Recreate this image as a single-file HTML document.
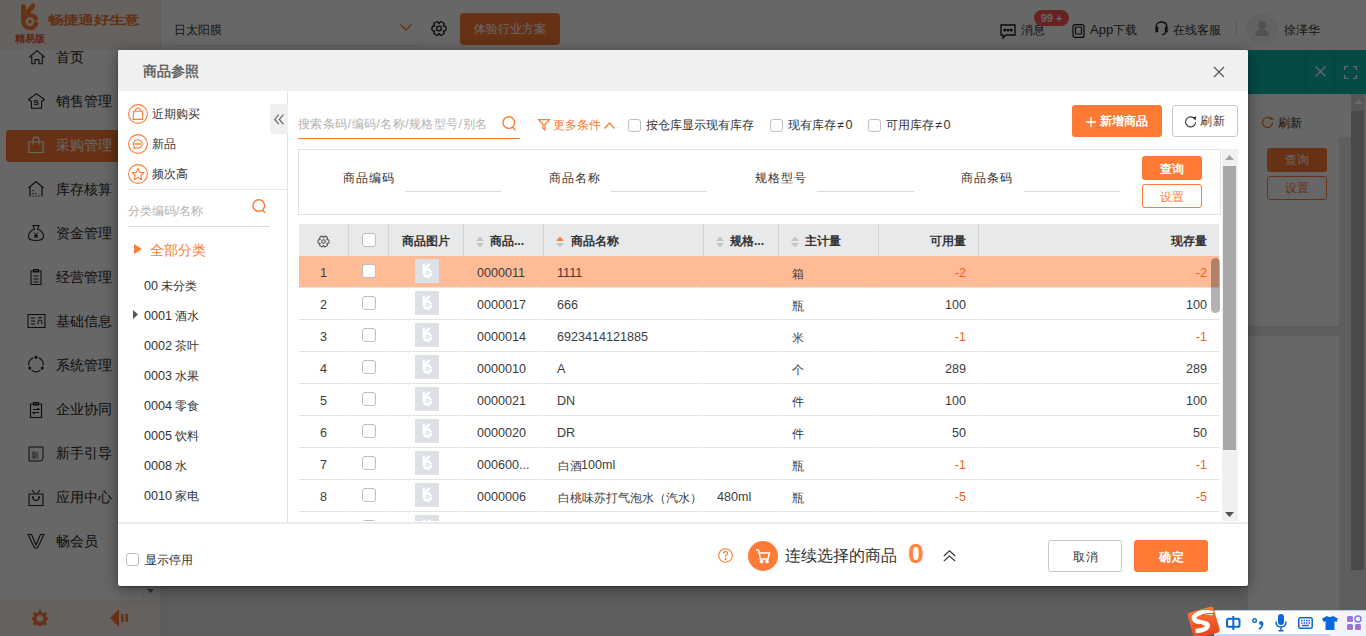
<!DOCTYPE html>
<html><head><meta charset="utf-8">
<style>
*{box-sizing:border-box;margin:0;padding:0}
html,body{width:1366px;height:636px;overflow:hidden;background:#e9e9e9;font-family:"Liberation Sans",sans-serif;color:#333}
.abs{position:absolute}
svg{display:block;overflow:visible}
.d{font-size:12.6px}
/* background app */
#logo{left:0;top:0;width:160px;height:50px;background:#fdf3ee}
#side{left:0;top:50px;width:160px;height:586px;background:#fff}
#side .it{position:absolute;left:56px;font-size:14px;color:#262626;line-height:16px;white-space:nowrap}
#side .ic{position:absolute;left:27px}
#side .act{position:absolute;left:6px;top:80px;width:160px;height:32px;background:#ff7b35;border-radius:3px}
#sidebot{left:0;top:600px;width:160px;height:36px;background:#fbefe9}
#strip{left:160px;top:50px;width:10px;height:586px;background:#e4e4e4}
#hdr{left:160px;top:0;width:1206px;height:50px;background:#fff;box-shadow:inset 1px 0 0 #e8e8e8}
#tabs{left:1248px;top:50px;width:118px;height:44px;background:#0cb9aa}
#rpanel0{left:1248px;top:94px;width:103px;height:43px;background:#fff}
#rpanel1{left:1248px;top:137px;width:91px;height:189px;background:#fff}
#rpanel2{left:1248px;top:336px;width:91px;height:300px;background:#fff}
#rscroll{left:1351px;top:94px;width:13px;height:476px;background:#d4d4d4}
#mask{left:0;top:0;width:1366px;height:636px;background:rgba(0,0,0,.595)}
.hd{position:absolute;font-size:12px;color:#333;line-height:14px;white-space:nowrap}
</style></head><body>
<div id="logo" class="abs">
  <svg class="abs" style="left:20px;top:3px" width="20" height="28" viewBox="0 0 20 28"><rect x="1" y="1" width="4.8" height="19" rx="2.4" fill="#ff7b35"/><path d="M7.4 9.6 L12.9 2.9" stroke="#ff7b35" stroke-width="4.8" stroke-linecap="round"/><circle cx="10" cy="18.6" r="8.7" fill="#ff7b35"/><circle cx="10" cy="18.6" r="4.3" fill="#fdf3ee"/><path d="M10 15.8 Q10.7 17.9 12.8 18.6 Q10.7 19.3 10 21.4 Q9.3 19.3 7.2 18.6 Q9.3 17.9 10 15.8Z" fill="#ff7b35"/><path d="M14.6 18.2 L19.2 16.6 L19.2 19.8 Z" fill="#fdf3ee"/></svg>
  <div class="abs" style="left:48px;top:12px;font-size:15.3px;font-weight:bold;color:#f5762f;letter-spacing:.2px;white-space:nowrap;line-height:16px;transform:scaleY(.76);transform-origin:0 50%">畅捷通好生意</div>
  <div class="abs" style="left:15px;top:33px;font-size:10px;font-weight:bold;color:#e85a2a;white-space:nowrap;line-height:12px">精易版</div>
</div>
<div id="side" class="abs">
  <div class="act"></div>
  <div class="it" style="top:-1px">首页</div>
  <div class="it" style="top:43px">销售管理</div>
  <div class="it" style="top:87px;color:#fff">采购管理</div>
  <div class="it" style="top:131px">库存核算</div>
  <div class="it" style="top:175px">资金管理</div>
  <div class="it" style="top:219px">经营管理</div>
  <div class="it" style="top:263px">基础信息</div>
  <div class="it" style="top:307px">系统管理</div>
  <div class="it" style="top:351px">企业协同</div>
  <div class="it" style="top:395px">新手引导</div>
  <div class="it" style="top:439px">应用中心</div>
  <div class="it" style="top:483px">畅会员</div>
  <!-- icons -->
  <svg class="ic" style="left:29px;top:0px" width="16" height="15" viewBox="0 0 16 15" fill="none" stroke="#222" stroke-width="1.1" stroke-linejoin="round"><path d="M.6 7 L8 .6 L15.4 7 H13.2 V13.8 H10 V9.6 H6 V13.8 H2.8 V7 Z"/></svg>
  <svg class="ic" style="left:28px;top:43px" width="17" height="16" viewBox="0 0 17 16" fill="none" stroke="#222" stroke-width="1.1" stroke-linejoin="round"><path d="M.6 6.5 L8.5 .6 L16.4 6.5 L13.6 8.5 V15.2 H3.4 V8.5 Z"/><text x="5.6" y="11.8" font-size="8" font-family="Liberation Sans" font-weight="bold" fill="#222" stroke="none">S</text></svg>
  <svg class="ic" style="top:86px" width="18" height="18" viewBox="0 0 18 18" fill="none" stroke="#fff" stroke-width="1.2"><path d="M2 6 H16 V16.5 H2 Z M6 8.5 V4 Q6 1.2 9 1.2 Q12 1.2 12 4 V8.5"/></svg>
  <svg class="ic" style="top:130px" width="18" height="18" viewBox="0 0 18 18" fill="none" stroke="#222" stroke-width="1.1"><path d="M1.5 8 L9 1.5 L16.5 8 M3 7 V16.5 M15 7 V16.5"/><path d="M6 10v1M6 13v1M6 15.5v1M9 13v1M9 15.5v1M12 15.5v1" stroke-width="1.3"/></svg>
  <svg class="ic" style="top:174px" width="18" height="18" viewBox="0 0 18 18" fill="none" stroke="#222" stroke-width="1.1"><path d="M6 1.5 H12 L10.5 5 Q16.5 7.5 16.5 12.5 Q16.5 16.5 9 16.5 Q1.5 16.5 1.5 12.5 Q1.5 7.5 7.5 5 Z"/><path d="M7 8.5 L9 11 L11 8.5 M9 11 V14 M7 11.5 H11 M7 13 H11" stroke-width="1"/></svg>
  <svg class="ic" style="top:218px" width="18" height="18" viewBox="0 0 18 18" fill="none" stroke="#222" stroke-width="1.1"><path d="M4 3 H14 V16.5 H4 Z M6.5 1.5 H11.5 V4 H6.5 Z M6.5 8 H11.5 M6.5 11 H11.5 M6.5 14 H11.5"/></svg>
  <svg class="ic" style="top:263px" width="19" height="16" viewBox="0 0 19 16" fill="none" stroke="#222" stroke-width="1.1"><path d="M1 1.5 H18 V14.5 H1 Z M4 5 H8 M4 8 H8 M4 11 H8"/><path d="M11 11 Q11 7 13 7 Q15 7 15 11 M11.5 5 Q13 3.5 14.5 5"/></svg>
  <svg class="ic" style="left:27px;top:306px" width="18" height="17" viewBox="0 0 18 17" fill="none" stroke="#222" stroke-width="1.1"><path d="M11.70 1.82 A7.2 7.2 0 0 1 16.13 9.50 M13.43 14.17 A7.2 7.2 0 0 1 4.57 14.17 M1.87 9.50 A7.2 7.2 0 0 1 6.30 1.82"/><circle cx="9.00" cy="1.30" r="1.5" fill="#222" stroke="none"/><circle cx="15.24" cy="12.10" r="1.5" fill="#222" stroke="none"/><circle cx="2.76" cy="12.10" r="1.5" fill="#222" stroke="none"/></svg>
  <svg class="ic" style="top:351px" width="18" height="18" viewBox="0 0 18 18" fill="none" stroke="#222" stroke-width="1.1"><path d="M3.5 3 H14.5 V16.5 H3.5 Z M6.5 1.5 H11.5 V4 H6.5 Z M6 8.5 H12 L10.5 7 M12 11.5 H6 L7.5 13"/></svg>
  <svg class="ic" style="top:395px" width="18" height="18" viewBox="0 0 18 18" fill="none" stroke="#222" stroke-width="1"><path d="M2 2 H16 V13 Q16 16 13 16 H2 Z"/><text x="4" y="12.5" font-size="8" fill="#222" stroke="none">新</text></svg>
  <svg class="ic" style="top:439px" width="18" height="18" viewBox="0 0 18 18" fill="none" stroke="#222" stroke-width="1.1"><path d="M2 5 H16 V16.5 H2 Z M5 1 L8 4.5 M13 1 L10 4.5 M6 10 Q9 13 12 10"/><circle cx="6" cy="8.5" r=".6" fill="#222"/><circle cx="12" cy="8.5" r=".6" fill="#222"/></svg>
  <svg class="ic" style="top:483px" width="18" height="16" viewBox="0 0 18 16" fill="none" stroke="#222" stroke-width="1.1"><path d="M1 1.5 H4.5 L9 12 L13.5 1.5 H17 L10.5 15 H7.5 Z M4.5 1.5 L8.5 11"/></svg>
  <div class="abs" style="left:142px;top:0;width:18px;height:550px;background:#f7f7f7"></div>
  <svg class="abs" style="left:147px;top:539px" width="7" height="4"><path d="M0 0 H7 L3.5 4Z" fill="#7a7a7a"/></svg>
</div>
<div id="sidebot" class="abs">
  <svg class="abs" style="left:32px;top:10px" width="16" height="16" viewBox="0 0 16 16"><path fill="#ff7b35" d="M6.8 0 H9.2 L9.6 2.2 Q10.6 2.5 11.5 3.1 L13.4 1.9 L15 3.6 L13.8 5.4 Q14.3 6.3 14.5 7.3 L16 7.7 V9.9 L14.5 10.3 Q14.2 11.3 13.7 12.1 L15 14 L13.3 15.6 L11.5 14.4 Q10.6 15 9.6 15.2 L9.2 16 H6.8 L6.4 15.2 Q5.4 15 4.5 14.4 L2.7 15.6 L1 14 L2.3 12.1 Q1.8 11.3 1.5 10.3 L0 9.9 V7.7 L1.5 7.3 Q1.7 6.3 2.2 5.4 L1 3.6 L2.6 1.9 L4.5 3.1 Q5.4 2.5 6.4 2.2 Z M8 5.2 A3.3 3.3 0 1 0 8 11.8 A3.3 3.3 0 1 0 8 5.2Z"/></svg>
  <svg class="abs" style="left:110px;top:9px" width="19" height="18" viewBox="0 0 19 18"><path d="M0 9 L9 0 V18 Z" fill="#ff7b35"/><rect x="11" y="5" width="2.6" height="8" fill="#ff7b35"/><rect x="15.5" y="5" width="2.6" height="8" fill="#ff7b35"/></svg>
</div>
<div id="strip" class="abs"></div>
<div id="hdr" class="abs">
  <div class="hd" style="left:14px;top:23px">日太阳膜</div>
  <div class="abs" style="left:15px;top:45px;width:243px;height:1px;background:#d9d9d9"></div>
  <svg class="abs" style="left:240px;top:24px" width="12" height="7" viewBox="0 0 12 7" fill="none" stroke="#ff7b35" stroke-width="1.3"><path d="M0.5 0.5 L6 6 L11.5 0.5"/></svg>
  <svg class="abs" style="left:271px;top:21px" width="16" height="15" viewBox="0 0 16 15" fill="none" stroke="#1a1a1a" stroke-width="1.3" stroke-linejoin="round"><path d="M14.69 5.45 Q15.56 7.50 14.69 9.55 L12.33 10.00 L13.12 12.27 Q11.78 14.05 9.57 14.32 L8.00 12.50 L6.43 14.32 Q4.22 14.05 2.88 12.27 L3.67 10.00 L1.31 9.55 Q0.44 7.50 1.31 5.45 L3.67 5.00 L2.88 2.73 Q4.22 0.95 6.43 0.68 L8.00 2.50 L9.57 0.68 Q11.78 0.95 13.12 2.73 L12.33 5.00Z"/><circle cx="8" cy="7.5" r="2.4"/></svg>
  <div class="abs" style="left:300px;top:13px;width:100px;height:32px;background:#ff7b35;border-radius:4px;color:#fff;font-size:12px;line-height:32px;text-align:center">体验行业方案</div>
  <!-- right -->
  <svg class="abs" style="left:840px;top:24px" width="16" height="15" viewBox="0 0 16 15" fill="none" stroke="#1a1a1a" stroke-width="1.3"><path d="M1 1 H15 V11 H6 L3 14 V11 H1 Z"/><circle cx="4.8" cy="6" r=".9" fill="#1a1a1a"/><circle cx="8" cy="6" r=".9" fill="#1a1a1a"/><circle cx="11.2" cy="6" r=".9" fill="#1a1a1a"/></svg>
  <div class="hd" style="left:861px;top:23px">消息</div>
  <div class="abs" style="left:874px;top:10px;width:35px;height:16px;background:#ff5656;border-radius:8px;color:#fff;font-size:11px;font-weight:bold;line-height:16px;text-align:center;white-space:nowrap">99 +</div>
  <svg class="abs" style="left:912px;top:24px" width="13" height="14" viewBox="0 0 13 14" fill="none" stroke="#1a1a1a" stroke-width="1.2"><rect x="1" y=".6" width="11" height="12.8" rx="2"/><rect x="3.5" y="3" width="6" height="7" rx=".5"/></svg>
  <div class="hd" style="left:930px;top:23px"><span style="font-size:13px">App</span>下载</div>
  <svg class="abs" style="left:994px;top:21px" width="15" height="15" viewBox="0 0 15 15" fill="none" stroke="#1a1a1a" stroke-width="1.3"><path d="M2 8 V6.5 Q2 1 7.5 1 Q13 1 13 6.5 V8 M2 6.5 H3.5 V10.5 H2 Z M13 6.5 H11.5 V10.5 H13Z M12 10.5 Q11.5 13.5 8 13.5"/></svg>
  <div class="hd" style="left:1013px;top:23px">在线客服</div>
  <div class="abs" style="left:1076px;top:21px;width:1px;height:16px;background:#ddd"></div>
  <div class="abs" style="left:1086px;top:13px;width:32px;height:32px;border-radius:50%;background:#f2f2f2"></div>
  <svg class="abs" style="left:1094px;top:20px" width="16" height="16" viewBox="0 0 16 16"><circle cx="8" cy="5" r="4" fill="#c8c8c8"/><path d="M1 16 Q1 9.5 8 9.5 Q15 9.5 15 16Z" fill="#c8c8c8"/></svg>
  <div class="hd" style="left:1124px;top:23px">徐泽华</div>
</div>
<div id="tabs" class="abs">
  <div class="abs" style="left:57px;top:0;width:1px;height:44px;background:#0aa597"></div>
  <div class="abs" style="left:86px;top:0;width:1px;height:44px;background:#0aa597"></div>
  <svg class="abs" style="left:67px;top:16px" width="11" height="11" viewBox="0 0 11 11" stroke="#fff" stroke-width="1.3"><path d="M.5 .5 L10.5 10.5 M10.5 .5 L.5 10.5"/></svg>
  <svg class="abs" style="left:96px;top:16px" width="13" height="13" viewBox="0 0 13 13" fill="none" stroke="#fff" stroke-width="1.3"><path d="M.6 4 V.6 H4 M9 .6 H12.4 V4 M12.4 9 V12.4 H9 M4 12.4 H.6 V9"/></svg>
</div>
<div id="rpanel0" class="abs">
  <svg class="abs" style="left:13px;top:22px" width="13" height="13" viewBox="0 0 13 13" fill="none" stroke="#ff7b35" stroke-width="1.4"><path d="M11.5 6.5 A5 5 0 1 1 9.5 2.5 M9.8 0.5 V3.2 H12.5"/></svg>
  <div class="hd" style="left:30px;top:22px;font-size:12px">刷新</div>
</div>
<div id="rpanel1" class="abs">
  <div class="abs" style="left:19px;top:11px;width:60px;height:24px;background:#ff7b35;border-radius:3px;color:#fff;font-size:12px;line-height:24px;text-align:center">查询</div>
  <div class="abs" style="left:19px;top:39px;width:60px;height:24px;border:1px solid #ff7b35;border-radius:3px;color:#ff7b35;font-size:12px;line-height:22px;text-align:center">设置</div>
</div>
<div id="rpanel2" class="abs"></div>
<div id="rscroll" class="abs">
  <div class="abs" style="left:0;top:17px;width:13px;height:459px;background:#b8b8b8"></div>
  <svg class="abs" style="left:3px;top:5px" width="9" height="5"><path d="M0 5 H9 L4.5 0Z" fill="#fff"/></svg>
</div>
<div id="mask" class="abs"></div>
<style>
#modal{left:118px;top:50px;width:1130px;height:536px;background:#fff;border-radius:2px;box-shadow:0 1px 2px rgba(0,0,0,.35),0 3px 16px rgba(0,0,0,.4);overflow:hidden}
#mhead{left:0;top:0;width:1130px;height:41px;background:#f0f0f0}
.lbl{position:absolute;font-size:12px;color:#333;line-height:14px;white-space:nowrap}
.cb{position:absolute;width:13px;height:13px;border:1px solid #c0c0c0;border-radius:3px;background:#fff}
.btn{position:absolute;border-radius:3px;text-align:center;white-space:nowrap}
#tbl{left:181px;top:174px;width:920px;height:297px;overflow:hidden}
.row{position:absolute;left:0;width:920px;height:32px;display:flex;font-size:12px;color:#3c3c3c}
.row>div{height:32px;white-space:nowrap;overflow:hidden;position:relative;flex:none}
.drow>div{line-height:35px;border-bottom:1px solid #e3e3e3;margin-right:1px}
.hrow{background:#e8e9eb;font-weight:bold;color:#333}
.hrow>div{line-height:35px;border-right:1px solid #d4d4d4}
.c1{width:50px;text-align:center}.c2{width:40px}.c3{width:75px;text-align:center}.c4{width:80px;padding-left:13px}.c5{width:160px;padding-left:13px}.c6{width:75px;padding-left:13px}.c7{width:100px;padding-left:12px}.c8{width:100px;text-align:right;padding-right:12px}.c9{width:240px;text-align:right;padding-right:12px;border-right:none!important}
.drow .c1{width:49px}.drow .c2{width:39px}.drow .c3{width:74px}.drow .c4{width:79px}.drow .c5{width:159px}.drow .c6{width:74px}.drow .c7{width:99px}.drow .c8{width:99px}.drow .c9{width:240px;margin-right:0;padding-right:12px}
.row .cb{left:13px;top:8px;width:14px;height:14px;border-color:#bdbdbd;border-radius:3px}
.img{position:absolute;left:26px;top:3px;width:24px;height:24px;background:#dde1e6}
.neg{color:#ff5a1a}
.z{position:relative;top:1px;left:.5px}
.sel{background:#ffbb96}
.sel>div{border-bottom-color:#e6e2e6}
.sort{position:absolute;top:12px;width:8px;height:12px}
</style>
<div id="modal" class="abs">
  <div id="mhead" class="abs">
    <div class="abs" style="left:25px;top:13px;font-size:14px;font-weight:bold;color:#666;line-height:16px;white-space:nowrap">商品参照</div>
    <svg class="abs" style="left:1096px;top:17px" width="10" height="10" viewBox="0 0 10 10" stroke="#555" stroke-width="1.2"><path d="M0 0 L10 10 M10 0 L0 10"/></svg>
  </div>
  <!-- left panel -->
  <div class="abs" style="left:169px;top:41px;width:1px;height:431px;background:#e3e3e3"></div>
  <svg class="abs" style="left:10px;top:54px" width="20" height="20" viewBox="0 0 20 20" fill="none" stroke="#ff7b35" stroke-width="1.1" stroke-linejoin="round"><circle cx="10" cy="10" r="9.4"/><path d="M5.6 7.2 H14.4 L14.8 15.4 H5.2 Z M7.6 7.2 V6.4 Q7.6 4 10 4 Q12.4 4 12.4 6.4 V7.2"/></svg>
  <div class="lbl" style="left:34px;top:57px">近期购买</div>
  <svg class="abs" style="left:10px;top:84px" width="20" height="20" viewBox="0 0 20 20" fill="none" stroke="#ff7b35" stroke-width="1.1"><circle cx="10" cy="10" r="9.4"/><path d="M6.2 12.6 A4.6 4.2 0 1 1 8 13.8 L6 14.8 Z" stroke-linejoin="round"/><path d="M6.8 11 V9 L8.2 11 V9 M9.6 9 H8.9 V11 H9.6 M8.9 10 H9.5 M10.3 9 L10.8 11 L11.4 9.4 L12 11 L12.6 9" stroke-width=".7"/></svg>
  <div class="lbl" style="left:34px;top:87px">新品</div>
  <svg class="abs" style="left:10px;top:114px" width="20" height="20" viewBox="0 0 20 20" fill="none" stroke="#ff7b35" stroke-width="1.1" stroke-linejoin="round"><circle cx="10" cy="10" r="9.4"/><path d="M10.00 4.30 L11.70 8.25 L15.99 8.65 L12.76 11.50 L13.70 15.70 L10.00 13.50 L6.30 15.70 L7.24 11.50 L4.01 8.65 L8.30 8.25Z"/></svg>
  <div class="lbl" style="left:34px;top:117px">频次高</div>
  <div class="abs" style="left:152px;top:54px;width:18px;height:30px;background:#f0f0f0;border-radius:3px 0 0 3px"></div>
  <svg class="abs" style="left:156px;top:64px" width="10" height="11" viewBox="0 0 10 11" fill="none" stroke="#666" stroke-width="1.2"><path d="M4.8 .6 L.7 5.4 L4.8 10.2 M9.4 .6 L5.3 5.4 L9.4 10.2"/></svg>
  <div class="abs" style="left:10px;top:139px;width:160px;height:1px;background:#e8e8e8"></div>
  <div class="lbl" style="left:10px;top:154px;color:#b3b3b3">分类编码/名称</div>
  <svg class="abs" style="left:134px;top:149px" width="15" height="15" viewBox="0 0 15 15" fill="none" stroke="#ff7b35" stroke-width="1.4"><circle cx="6.8" cy="6.6" r="5.8"/><path d="M10.5 11.3 L13.5 14"/></svg>
  <div class="abs" style="left:10px;top:176px;width:142px;height:1px;background:#d9d9d9"></div>
  <svg class="abs" style="left:16px;top:194px" width="8" height="10"><path d="M0 0 L8 5 L0 10Z" fill="#ff7b35"/></svg>
  <div class="abs" style="left:32px;top:192px;font-size:14px;color:#ff7b35;line-height:16px;white-space:nowrap">全部分类</div>
  <div class="lbl" style="left:26px;top:229px"><span class="d">00</span> 未分类</div>
  <svg class="abs" style="left:15px;top:260px" width="5" height="9"><path d="M0 0 L5 4.5 L0 9Z" fill="#555"/></svg>
  <div class="lbl" style="left:26px;top:259px"><span class="d">0001</span> 酒水</div>
  <div class="lbl" style="left:26px;top:289px"><span class="d">0002</span> 茶叶</div>
  <div class="lbl" style="left:26px;top:319px"><span class="d">0003</span> 水果</div>
  <div class="lbl" style="left:26px;top:349px"><span class="d">0004</span> 零食</div>
  <div class="lbl" style="left:26px;top:379px"><span class="d">0005</span> 饮料</div>
  <div class="lbl" style="left:26px;top:409px"><span class="d">0008</span> 水</div>
  <div class="lbl" style="left:26px;top:439px"><span class="d">0010</span> 家电</div>
  <!-- footer -->
  <div class="abs" style="left:0;top:472px;width:1130px;height:2px;background:#ececec"></div>
  <div class="cb" style="left:8px;top:503px"></div>
  <div class="lbl" style="left:27px;top:503px">显示停用</div>
  <svg class="abs" style="left:600px;top:498px" width="15" height="15" viewBox="0 0 15 15" fill="none" stroke="#ff7b35" stroke-width="1.1"><circle cx="7.5" cy="7.5" r="6.8"/><path d="M5.4 5.8 Q5.4 3.6 7.5 3.6 Q9.6 3.6 9.6 5.6 Q9.6 6.8 7.5 7.6 V9"/><circle cx="7.5" cy="11" r=".5" fill="#ff7b35"/></svg>
  <div class="abs" style="left:630px;top:491px;width:30px;height:30px;border-radius:50%;background:#ff7b35"></div>
  <svg class="abs" style="left:637px;top:498px" width="16" height="16" viewBox="0 0 16 16" fill="none" stroke="#fff" stroke-width="1.5"><path d="M1 2 H3.5 L5.5 11 H13 L14.5 5 H4.5"/><circle cx="6.5" cy="13.5" r="1.1" fill="#fff"/><circle cx="12" cy="13.5" r="1.1" fill="#fff"/></svg>
  <div class="abs" style="left:667px;top:497px;font-size:16px;color:#333;line-height:18px;white-space:nowrap">连续选择的商品</div>
  <div class="abs" style="left:790px;top:490px;font-size:28px;font-weight:bold;color:#ff8540;line-height:28px;transform:scaleX(1.02);transform-origin:0 0">0</div>
  <svg class="abs" style="left:825px;top:500px" width="13" height="12" viewBox="0 0 13 12" fill="none" stroke="#333" stroke-width="1.15"><path d="M.8 6 L6.5 .8 L12.2 6 M.8 11.2 L6.5 6 L12.2 11.2"/></svg>
  <div class="btn" style="left:930px;top:490px;width:74px;height:32px;border:1px solid #c9c9c9;font-size:12px;letter-spacing:1px;padding-left:1px;line-height:30px;padding-top:1px;color:#333">取消</div>
  <div class="btn" style="left:1016px;top:490px;width:74px;height:32px;background:#ff7b35;font-size:12px;letter-spacing:1px;padding-left:1px;line-height:32px;padding-top:1px;color:#fff;font-weight:bold">确定</div>
  <!-- toolbar -->
  <div class="lbl" style="left:180px;top:67px;font-size:12px;letter-spacing:.45px;color:#b3b3b3">搜索条码/编码/名称/规格型号/别名</div>
  <svg class="abs" style="left:384px;top:66px" width="15" height="15" viewBox="0 0 15 15" fill="none" stroke="#ff7b35" stroke-width="1.4"><circle cx="6.8" cy="6.6" r="5.8"/><path d="M10.5 11.3 L13.5 14"/></svg>
  <div class="abs" style="left:180px;top:87.5px;width:222px;height:1.5px;background:#ff7b35"></div>
  <svg class="abs" style="left:420px;top:69px" width="12" height="12" viewBox="0 0 12 12" fill="none" stroke="#ff7b35" stroke-width="1.3"><path d="M.7 .7 H11.3 L7 5.5 V11 L5 9.5 V5.5 Z"/></svg>
  <div class="lbl" style="left:435px;top:68px;color:#ff7b35">更多条件</div>
  <svg class="abs" style="left:486px;top:72px" width="11" height="7" viewBox="0 0 11 7" fill="none" stroke="#ff7b35" stroke-width="1.3"><path d="M.5 6.5 L5.5 1 L10.5 6.5"/></svg>
  <div class="cb" style="left:510px;top:69px"></div>
  <div class="lbl" style="left:528px;top:68px">按仓库显示现有库存</div>
  <div class="cb" style="left:652px;top:69px"></div>
  <div class="lbl" style="left:670px;top:68px">现有库存<span style="margin:0 1.5px">≠</span><span class="d">0</span></div>
  <div class="cb" style="left:750px;top:69px"></div>
  <div class="lbl" style="left:768px;top:68px">可用库存<span style="margin:0 1.5px">≠</span><span class="d">0</span></div>
  <div class="btn" style="left:954px;top:55px;width:90px;height:32px;background:#ff7b35;color:#fff;font-size:12px;line-height:32px;font-weight:bold;text-align:left;padding-left:28px">新增商品<svg class="abs" style="left:14px;top:12px" width="10" height="10" viewBox="0 0 10 10" stroke="#fff" stroke-width="1.4"><path d="M5 0 V10 M0 5 H10"/></svg></div>
  <div class="btn" style="left:1054px;top:55px;width:66px;height:32px;border:1px solid #c9c9c9;color:#3a3a3a;font-size:12px;letter-spacing:1px;line-height:30px;padding-left:16px">刷新</div>
  <svg class="abs" style="left:1067px;top:66px" width="12" height="12" viewBox="0 0 12 12"><path d="M10.6 6.2 A5 5 0 1 1 8.6 1.9" fill="none" stroke="#333" stroke-width="1.1"/><path d="M7.2 1.2 L11.4 .4 L10.4 4.4 Z" fill="#333"/></svg>
  <!-- query box -->
  <div class="abs" style="left:180px;top:99px;width:923px;height:66px;border:1px solid #e2e2e2"></div>
  <div class="lbl" style="left:225px;top:121px;font-size:12px;letter-spacing:1.15px">商品编码</div>
  <div class="abs" style="left:287px;top:141px;width:96px;height:1px;background:#dcdcdc"></div>
  <div class="lbl" style="left:431px;top:121px;font-size:12px;letter-spacing:1.15px">商品名称</div>
  <div class="abs" style="left:493px;top:141px;width:96px;height:1px;background:#dcdcdc"></div>
  <div class="lbl" style="left:637px;top:121px;font-size:12px;letter-spacing:1.15px">规格型号</div>
  <div class="abs" style="left:699px;top:141px;width:97px;height:1px;background:#dcdcdc"></div>
  <div class="lbl" style="left:843px;top:121px;font-size:12px;letter-spacing:1.15px">商品条码</div>
  <div class="abs" style="left:906px;top:141px;width:96px;height:1px;background:#dcdcdc"></div>
  <div class="btn" style="left:1024px;top:106px;width:60px;height:24px;background:#ff7b35;color:#fff;font-size:12px;line-height:22px;padding-top:2px;font-weight:bold">查询</div>
  <div class="btn" style="left:1024px;top:134px;width:60px;height:24px;border:1px solid #ff7b35;color:#ff7b35;font-size:12px;line-height:20px;padding-top:2px">设置</div>
  <!-- outer scrollbar -->
  <div class="abs" style="left:1104px;top:99px;width:16px;height:372px;background:#f0f0f0"></div>
  <div class="abs" style="left:1105px;top:116px;width:13px;height:284px;background:#a8a8a8"></div>
  <svg class="abs" style="left:1107px;top:105px" width="9" height="5"><path d="M0 5 H9 L4.5 0Z" fill="#a3a3a3"/></svg>
  <svg class="abs" style="left:1107px;top:462px" width="9" height="5"><path d="M0 0 H9 L4.5 5Z" fill="#505050"/></svg>
  <div id="tbl" class="abs">
<div class="row hrow" style="top:0"><div class="c1"><svg class="abs" style="left:18px;top:11px" width="13" height="13" viewBox="0 0 13 13" fill="none" stroke="#555" stroke-width="1.1" stroke-linejoin="round"><path d="M11.76 4.89 Q12.44 6.50 11.76 8.11 L9.88 8.45 L10.52 10.25 Q9.47 11.64 7.74 11.86 L6.50 10.40 L5.26 11.86 Q3.53 11.64 2.48 10.25 L3.12 8.45 L1.24 8.11 Q0.56 6.50 1.24 4.89 L3.12 4.55 L2.48 2.75 Q3.53 1.36 5.26 1.14 L6.50 2.60 L7.74 1.14 Q9.47 1.36 10.52 2.75 L9.88 4.55Z"/><circle cx="6.5" cy="6.5" r="1.8"/></svg></div><div class="c2"><div class="cb" style="left:13px;top:9px;width:14px;height:14px"></div></div><div class="c3">商品图片</div><div class="c4" style="padding-left:26px">商品...<svg class="sort" style="left:12px" viewBox="0 0 8 12"><path d="M0 5 L4 0.6 L8 5Z" fill="#c4c4c4"/><path d="M0 7 L4 11.4 L8 7Z" fill="#c4c4c4"/></svg></div><div class="c5" style="padding-left:27px">商品名称<svg class="sort" style="left:12px" viewBox="0 0 8 12"><path d="M0 5 L4 0.6 L8 5Z" fill="#ff7b35"/><path d="M0 7 L4 11.4 L8 7Z" fill="#c4c4c4"/></svg></div><div class="c6" style="padding-left:26px">规格...<svg class="sort" style="left:12px" viewBox="0 0 8 12"><path d="M0 5 L4 0.6 L8 5Z" fill="#c4c4c4"/><path d="M0 7 L4 11.4 L8 7Z" fill="#c4c4c4"/></svg></div><div class="c7" style="padding-left:26px">主计量<svg class="sort" style="left:12px" viewBox="0 0 8 12"><path d="M0 5 L4 0.6 L8 5Z" fill="#c4c4c4"/><path d="M0 7 L4 11.4 L8 7Z" fill="#c4c4c4"/></svg></div><div class="c8">可用量</div><div class="c9">现存量</div></div>
<div class="row drow sel" style="top:32px"><div class="c1"><span class="d">1</span></div><div class="c2"><div class="cb"></div></div><div class="c3"><div class="img"><svg class="abs" style="left:7px;top:4px" width="11" height="15" viewBox="0 0 20 28"><rect x="1" y="1" width="4.8" height="19" rx="2.4" fill="#fff"/><path d="M7.4 9.6 L12.9 2.9" stroke="#fff" stroke-width="4.8" stroke-linecap="round"/><circle cx="10" cy="18.6" r="8.7" fill="#fff"/><circle cx="10" cy="18.6" r="4.3" fill="#dde1e6"/><path d="M10 15.8 Q10.7 17.9 12.8 18.6 Q10.7 19.3 10 21.4 Q9.3 19.3 7.2 18.6 Q9.3 17.9 10 15.8Z" fill="#fff"/><path d="M14.6 18.2 L19.2 16.6 L19.2 19.8 Z" fill="#dde1e6"/></svg></div></div><div class="c4"><span class="d">0000011</span></div><div class="c5"><span class="d">1111</span></div><div class="c6"></div><div class="c7"><span class="z">箱</span></div><div class="c8 neg"><span class="d">-2</span></div><div class="c9 neg"><span class="d">-2</span></div></div>
<div class="row drow" style="top:64px"><div class="c1"><span class="d">2</span></div><div class="c2"><div class="cb"></div></div><div class="c3"><div class="img"><svg class="abs" style="left:7px;top:4px" width="11" height="15" viewBox="0 0 20 28"><rect x="1" y="1" width="4.8" height="19" rx="2.4" fill="#fff"/><path d="M7.4 9.6 L12.9 2.9" stroke="#fff" stroke-width="4.8" stroke-linecap="round"/><circle cx="10" cy="18.6" r="8.7" fill="#fff"/><circle cx="10" cy="18.6" r="4.3" fill="#dde1e6"/><path d="M10 15.8 Q10.7 17.9 12.8 18.6 Q10.7 19.3 10 21.4 Q9.3 19.3 7.2 18.6 Q9.3 17.9 10 15.8Z" fill="#fff"/><path d="M14.6 18.2 L19.2 16.6 L19.2 19.8 Z" fill="#dde1e6"/></svg></div></div><div class="c4"><span class="d">0000017</span></div><div class="c5"><span class="d">666</span></div><div class="c6"></div><div class="c7"><span class="z">瓶</span></div><div class="c8"><span class="d">100</span></div><div class="c9"><span class="d">100</span></div></div>
<div class="row drow" style="top:96px"><div class="c1"><span class="d">3</span></div><div class="c2"><div class="cb"></div></div><div class="c3"><div class="img"><svg class="abs" style="left:7px;top:4px" width="11" height="15" viewBox="0 0 20 28"><rect x="1" y="1" width="4.8" height="19" rx="2.4" fill="#fff"/><path d="M7.4 9.6 L12.9 2.9" stroke="#fff" stroke-width="4.8" stroke-linecap="round"/><circle cx="10" cy="18.6" r="8.7" fill="#fff"/><circle cx="10" cy="18.6" r="4.3" fill="#dde1e6"/><path d="M10 15.8 Q10.7 17.9 12.8 18.6 Q10.7 19.3 10 21.4 Q9.3 19.3 7.2 18.6 Q9.3 17.9 10 15.8Z" fill="#fff"/><path d="M14.6 18.2 L19.2 16.6 L19.2 19.8 Z" fill="#dde1e6"/></svg></div></div><div class="c4"><span class="d">0000014</span></div><div class="c5"><span class="d">6923414121885</span></div><div class="c6"></div><div class="c7"><span class="z">米</span></div><div class="c8 neg"><span class="d">-1</span></div><div class="c9 neg"><span class="d">-1</span></div></div>
<div class="row drow" style="top:128px"><div class="c1"><span class="d">4</span></div><div class="c2"><div class="cb"></div></div><div class="c3"><div class="img"><svg class="abs" style="left:7px;top:4px" width="11" height="15" viewBox="0 0 20 28"><rect x="1" y="1" width="4.8" height="19" rx="2.4" fill="#fff"/><path d="M7.4 9.6 L12.9 2.9" stroke="#fff" stroke-width="4.8" stroke-linecap="round"/><circle cx="10" cy="18.6" r="8.7" fill="#fff"/><circle cx="10" cy="18.6" r="4.3" fill="#dde1e6"/><path d="M10 15.8 Q10.7 17.9 12.8 18.6 Q10.7 19.3 10 21.4 Q9.3 19.3 7.2 18.6 Q9.3 17.9 10 15.8Z" fill="#fff"/><path d="M14.6 18.2 L19.2 16.6 L19.2 19.8 Z" fill="#dde1e6"/></svg></div></div><div class="c4"><span class="d">0000010</span></div><div class="c5"><span class="d">A</span></div><div class="c6"></div><div class="c7"><span class="z">个</span></div><div class="c8"><span class="d">289</span></div><div class="c9"><span class="d">289</span></div></div>
<div class="row drow" style="top:160px"><div class="c1"><span class="d">5</span></div><div class="c2"><div class="cb"></div></div><div class="c3"><div class="img"><svg class="abs" style="left:7px;top:4px" width="11" height="15" viewBox="0 0 20 28"><rect x="1" y="1" width="4.8" height="19" rx="2.4" fill="#fff"/><path d="M7.4 9.6 L12.9 2.9" stroke="#fff" stroke-width="4.8" stroke-linecap="round"/><circle cx="10" cy="18.6" r="8.7" fill="#fff"/><circle cx="10" cy="18.6" r="4.3" fill="#dde1e6"/><path d="M10 15.8 Q10.7 17.9 12.8 18.6 Q10.7 19.3 10 21.4 Q9.3 19.3 7.2 18.6 Q9.3 17.9 10 15.8Z" fill="#fff"/><path d="M14.6 18.2 L19.2 16.6 L19.2 19.8 Z" fill="#dde1e6"/></svg></div></div><div class="c4"><span class="d">0000021</span></div><div class="c5"><span class="d">DN</span></div><div class="c6"></div><div class="c7"><span class="z">件</span></div><div class="c8"><span class="d">100</span></div><div class="c9"><span class="d">100</span></div></div>
<div class="row drow" style="top:192px"><div class="c1"><span class="d">6</span></div><div class="c2"><div class="cb"></div></div><div class="c3"><div class="img"><svg class="abs" style="left:7px;top:4px" width="11" height="15" viewBox="0 0 20 28"><rect x="1" y="1" width="4.8" height="19" rx="2.4" fill="#fff"/><path d="M7.4 9.6 L12.9 2.9" stroke="#fff" stroke-width="4.8" stroke-linecap="round"/><circle cx="10" cy="18.6" r="8.7" fill="#fff"/><circle cx="10" cy="18.6" r="4.3" fill="#dde1e6"/><path d="M10 15.8 Q10.7 17.9 12.8 18.6 Q10.7 19.3 10 21.4 Q9.3 19.3 7.2 18.6 Q9.3 17.9 10 15.8Z" fill="#fff"/><path d="M14.6 18.2 L19.2 16.6 L19.2 19.8 Z" fill="#dde1e6"/></svg></div></div><div class="c4"><span class="d">0000020</span></div><div class="c5"><span class="d">DR</span></div><div class="c6"></div><div class="c7"><span class="z">件</span></div><div class="c8"><span class="d">50</span></div><div class="c9"><span class="d">50</span></div></div>
<div class="row drow" style="top:224px"><div class="c1"><span class="d">7</span></div><div class="c2"><div class="cb"></div></div><div class="c3"><div class="img"><svg class="abs" style="left:7px;top:4px" width="11" height="15" viewBox="0 0 20 28"><rect x="1" y="1" width="4.8" height="19" rx="2.4" fill="#fff"/><path d="M7.4 9.6 L12.9 2.9" stroke="#fff" stroke-width="4.8" stroke-linecap="round"/><circle cx="10" cy="18.6" r="8.7" fill="#fff"/><circle cx="10" cy="18.6" r="4.3" fill="#dde1e6"/><path d="M10 15.8 Q10.7 17.9 12.8 18.6 Q10.7 19.3 10 21.4 Q9.3 19.3 7.2 18.6 Q9.3 17.9 10 15.8Z" fill="#fff"/><path d="M14.6 18.2 L19.2 16.6 L19.2 19.8 Z" fill="#dde1e6"/></svg></div></div><div class="c4"><span class="d">000600...</span></div><div class="c5"><span class="z">白酒</span><span class="d">100ml</span></div><div class="c6"></div><div class="c7"><span class="z">瓶</span></div><div class="c8 neg"><span class="d">-1</span></div><div class="c9 neg"><span class="d">-1</span></div></div>
<div class="row drow" style="top:256px"><div class="c1"><span class="d">8</span></div><div class="c2"><div class="cb"></div></div><div class="c3"><div class="img"><svg class="abs" style="left:7px;top:4px" width="11" height="15" viewBox="0 0 20 28"><rect x="1" y="1" width="4.8" height="19" rx="2.4" fill="#fff"/><path d="M7.4 9.6 L12.9 2.9" stroke="#fff" stroke-width="4.8" stroke-linecap="round"/><circle cx="10" cy="18.6" r="8.7" fill="#fff"/><circle cx="10" cy="18.6" r="4.3" fill="#dde1e6"/><path d="M10 15.8 Q10.7 17.9 12.8 18.6 Q10.7 19.3 10 21.4 Q9.3 19.3 7.2 18.6 Q9.3 17.9 10 15.8Z" fill="#fff"/><path d="M14.6 18.2 L19.2 16.6 L19.2 19.8 Z" fill="#dde1e6"/></svg></div></div><div class="c4"><span class="d">0000006</span></div><div class="c5"><span class="z">白桃味苏打气泡水（汽水）</span></div><div class="c6"><span class="d">480ml</span></div><div class="c7"><span class="z">瓶</span></div><div class="c8 neg"><span class="d">-5</span></div><div class="c9 neg"><span class="d">-5</span></div></div>
<div class="row drow" style="top:288px"><div class="c1"><span class="d"></span></div><div class="c2"><div class="cb"></div></div><div class="c3"><div class="img"><svg class="abs" style="left:7px;top:4px" width="11" height="15" viewBox="0 0 20 28"><rect x="1" y="1" width="4.8" height="19" rx="2.4" fill="#fff"/><path d="M7.4 9.6 L12.9 2.9" stroke="#fff" stroke-width="4.8" stroke-linecap="round"/><circle cx="10" cy="18.6" r="8.7" fill="#fff"/><circle cx="10" cy="18.6" r="4.3" fill="#dde1e6"/><path d="M10 15.8 Q10.7 17.9 12.8 18.6 Q10.7 19.3 10 21.4 Q9.3 19.3 7.2 18.6 Q9.3 17.9 10 15.8Z" fill="#fff"/><path d="M14.6 18.2 L19.2 16.6 L19.2 19.8 Z" fill="#dde1e6"/></svg></div></div><div class="c4"></div><div class="c5"></div><div class="c6"></div><div class="c7"></div><div class="c8"></div><div class="c9"></div></div>
</div>
<div class="abs" style="left:1093px;top:208px;width:9px;height:55px;border-radius:4.5px;background:rgba(0,0,0,.3)"></div>
</div>
</div>

<div class="abs" style="left:1214px;top:610px;width:152px;height:26px;background:#fff;border:1px solid #b8d0f0;border-right:none;border-bottom:2px solid #c5d8f2;border-radius:2px 0 0 0"></div>
<div class="abs" style="left:1330px;top:611px;width:36px;height:25px;background:linear-gradient(135deg,#fdf0f8,#e8f6ff)"></div>
<svg class="abs" style="left:1186px;top:604px" width="36" height="32" viewBox="0 0 36 32"><defs><linearGradient id="sg" x1="0" y1="0" x2="0" y2="1"><stop offset="0" stop-color="#f8743a"/><stop offset="1" stop-color="#e9461a"/></linearGradient></defs><g transform="rotate(-16 18 18)"><rect x="4" y="5" width="27" height="27" rx="3" fill="url(#sg)"/></g><path d="M27 9.2 Q14 6.2 8.5 12.2 Q6 16.8 14.5 18.2 Q22.5 19.2 21.5 22.6 Q19.5 26.2 9.5 27" fill="none" stroke="#fff" stroke-width="4.6"/><path d="M27 9.6 Q19 9 15.5 11.2 M6.5 22 Q12 21.6 16 20.4" fill="none" stroke="#ee4a1c" stroke-width="1.1"/></svg>
<svg class="abs" style="left:1226px;top:616px" width="15" height="14" viewBox="0 0 15 14"><rect x="1" y="2.8" width="12.5" height="8" rx="1.6" fill="none" stroke="#0a68d8" stroke-width="2"/><rect x="6.3" y="0" width="2" height="14" rx=".6" fill="#0a68d8"/></svg>
<svg class="abs" style="left:1251px;top:618px" width="13" height="12" viewBox="0 0 13 12"><circle cx="3.6" cy="2.6" r="1.8" fill="none" stroke="#0a68d8" stroke-width="1.4"/><circle cx="10" cy="5" r="1.9" fill="#0a68d8"/><path d="M11.6 5.3 Q11.6 9 8.6 10.8" fill="none" stroke="#0a68d8" stroke-width="1.6" stroke-linecap="round"/></svg>
<svg class="abs" style="left:1275px;top:614px" width="12" height="18" viewBox="0 0 12 18"><rect x="3" y="0" width="6" height="11" rx="3" fill="#0a68d8"/><path d="M1 7.5 Q1 13 6 13 Q11 13 11 7.5 M6 13 V16.5 M3.5 16.8 H8.5" fill="none" stroke="#0a68d8" stroke-width="1.5"/></svg>
<svg class="abs" style="left:1298px;top:617px" width="15" height="12" viewBox="0 0 15 12"><rect x=".8" y=".8" width="13.4" height="10.4" rx="1.5" fill="none" stroke="#0a68d8" stroke-width="1.5"/><path d="M3 3.5h1.5M5.5 3.5h1.5M8 3.5h1.5M10.5 3.5h1.5M3 6h1.5M5.5 6h1.5M8 6h1.5M10.5 6h1.5M4 8.5h7" stroke="#0a68d8" stroke-width="1.3"/></svg>
<svg class="abs" style="left:1322px;top:616px" width="16" height="14" viewBox="0 0 16 14"><path d="M5 0 Q8 2 11 0 L16 2.5 L14.5 6 L12.5 5.2 V14 H3.5 V5.2 L1.5 6 L0 2.5Z" fill="#0a68d8"/></svg>
<svg class="abs" style="left:1347px;top:616px" width="14" height="14" viewBox="0 0 14 14"><defs><linearGradient id="g1" x1="0" y1="0" x2="0" y2="1"><stop offset="0" stop-color="#7a7cf0"/><stop offset="1" stop-color="#c06fb0"/></linearGradient></defs><rect x="0" y="0" width="6" height="6" rx="1.5" fill="url(#g1)"/><rect x="8" y="0" width="6" height="6" rx="3" fill="none" stroke="#7a7cf0" stroke-width="1.5"/><rect x="0" y="8" width="6" height="6" rx="1.5" fill="url(#g1)"/><rect x="8" y="8" width="6" height="6" rx="1.5" fill="url(#g1)"/></svg>
</body></html>
